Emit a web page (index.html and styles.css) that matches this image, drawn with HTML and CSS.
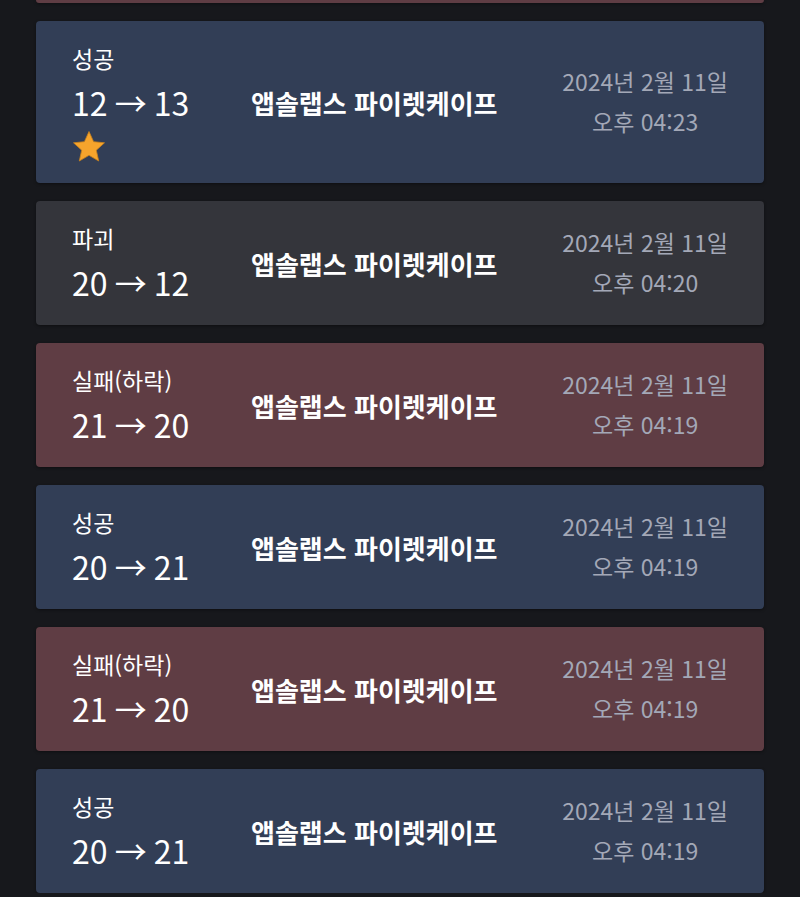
FILE: index.html
```html
<!DOCTYPE html>
<html lang="ko">
<head>
  <meta charset="UTF-8">
  <meta name="viewport" content="width=device-width, initial-scale=1.0">
  <title>스타포스 기록</title>
  <link rel="stylesheet" href="styles.css">
</head>
<body>
  <div class="log">
    <!-- previous entry, scrolled mostly out of view -->
    <div class="entry fail partial"></div>

    <div class="entry success">
      <div class="result">
        <div class="label">성공</div>
        <div class="stars">12 → 13</div>
        <div class="bonus">
          <svg width="34" height="32" viewBox="0 0 34 32">
            <path d="M17 1.5l4.6 10.2 10.9 1.1-8.2 7.4 2.4 10.8L17 25.3 7.3 31l2.4-10.8-8.2-7.4 10.9-1.1z" fill="#f6a42c" stroke="#c9821c" stroke-width="0.8" stroke-linejoin="round"/>
          </svg>
        </div>
      </div>
      <div class="item">앱솔랩스 파이렛케이프</div>
      <div class="date">2024년 2월 11일<br>오후 04:23</div>
    </div>

    <div class="entry destroy">
      <div class="result">
        <div class="label">파괴</div>
        <div class="stars">20 → 12</div>
      </div>
      <div class="item">앱솔랩스 파이렛케이프</div>
      <div class="date">2024년 2월 11일<br>오후 04:20</div>
    </div>

    <div class="entry fail">
      <div class="result">
        <div class="label">실패(하락)</div>
        <div class="stars">21 → 20</div>
      </div>
      <div class="item">앱솔랩스 파이렛케이프</div>
      <div class="date">2024년 2월 11일<br>오후 04:19</div>
    </div>

    <div class="entry success">
      <div class="result">
        <div class="label">성공</div>
        <div class="stars">20 → 21</div>
      </div>
      <div class="item">앱솔랩스 파이렛케이프</div>
      <div class="date">2024년 2월 11일<br>오후 04:19</div>
    </div>

    <div class="entry fail">
      <div class="result">
        <div class="label">실패(하락)</div>
        <div class="stars">21 → 20</div>
      </div>
      <div class="item">앱솔랩스 파이렛케이프</div>
      <div class="date">2024년 2월 11일<br>오후 04:19</div>
    </div>

    <div class="entry success">
      <div class="result">
        <div class="label">성공</div>
        <div class="stars">20 → 21</div>
      </div>
      <div class="item">앱솔랩스 파이렛케이프</div>
      <div class="date">2024년 2월 11일<br>오후 04:19</div>
    </div>
  </div>
</body>
</html>
```

FILE: styles.css
```css
body {
  margin: 0;
  background: #17181c;
  font-family: "Noto Sans CJK KR", "Noto Sans", sans-serif;
  color: #fff;
  overflow: hidden;
}

.log {
  display: flex;
  flex-direction: column;
  gap: 18px;
  padding: 0 36px;
}

.entry {
  display: grid;
  grid-template-columns: 179px 1fr auto;
  align-items: center;
  padding: 18px 36px;
  border-radius: 4px;
  box-shadow: 0 1px 3px rgba(0, 0, 0, 0.4);
}

.entry.partial {
  height: 3px;
  padding: 0;
  border-radius: 0 0 4px 4px;
}

.success {
  background: #323e56;
}

.destroy {
  background: #34353b;
}

.fail {
  background: #5f3d44;
}

.label {
  font-size: 23px;
  line-height: 38px;
}

.stars {
  font-size: 32px;
  line-height: 50px;
}

.bonus {
  height: 38px;
  display: flex;
  align-items: center;
}

.item {
  font-size: 26px;
  font-weight: 700;
}

.date {
  font-size: 23px;
  line-height: 40px;
  text-align: center;
  color: #a3a8b7;
  margin-top: -2px;
}
```
